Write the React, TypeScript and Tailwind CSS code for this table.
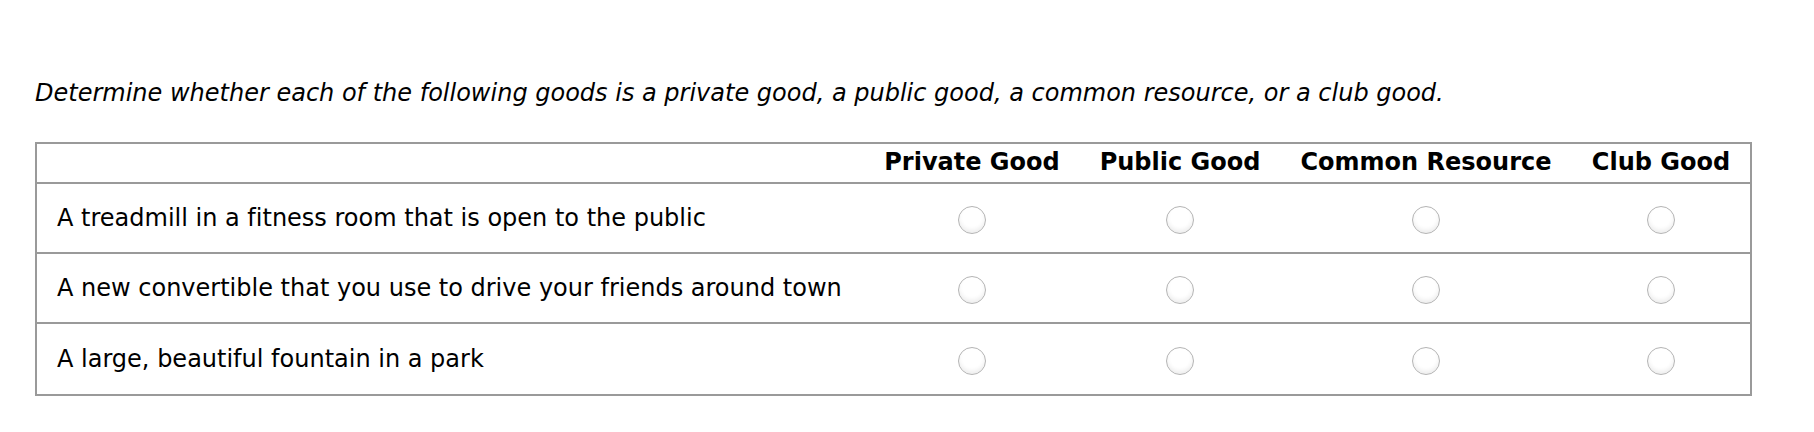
const columns = ["Private Good", "Public Good", "Common Resource", "Club Good"];

const goods = [
  "A treadmill in a fitness room that is open to the public",
  "A new convertible that you use to drive your friends around town",
  "A large, beautiful fountain in a park",
];

function Radio() {
  return (
    <span className="mt-[4px] inline-block h-[28px] w-[28px] rounded-full border border-[#b4b4b4] bg-white shadow-[inset_0_-3px_4px_rgba(0,0,0,0.07)]" />
  );
}

export default function App() {
  return (
    <div className="h-[432px] w-[1814px] bg-white pl-[35px] pt-[79px] font-['DejaVu_Sans',sans-serif] text-black [font-variant-ligatures:none]">
      <p className="text-[24px] italic leading-[28px]">
        Determine whether each of the following goods is a private good, a public good, a common resource, or a club good.
      </p>

      <div className="mt-[35px] w-[1717px] border-2 border-[#9a9a9a]">
        {/* header */}
        <div className="grid h-[40px] grid-cols-[1fr_216px_200px_292px_178px] items-center border-b-2 border-[#9a9a9a] pb-[2px]">
          <div />
          {columns.map((c) => (
            <div key={c} className="text-center text-[24px] font-bold leading-[28px]">
              {c}
            </div>
          ))}
        </div>

        {goods.map((g, i) => (
          <div
            key={g}
            className={`grid h-[70px] grid-cols-[1fr_216px_200px_292px_178px] items-center ${
              i < goods.length - 1 ? "border-b-2 border-[#9a9a9a]" : ""
            }`}
          >
            <div className="pl-[20px] text-[24px] leading-[28px]">{g}</div>
            {columns.map((c) => (
              <div key={c} className="flex justify-center">
                <Radio />
              </div>
            ))}
          </div>
        ))}
      </div>
    </div>
  );
}
